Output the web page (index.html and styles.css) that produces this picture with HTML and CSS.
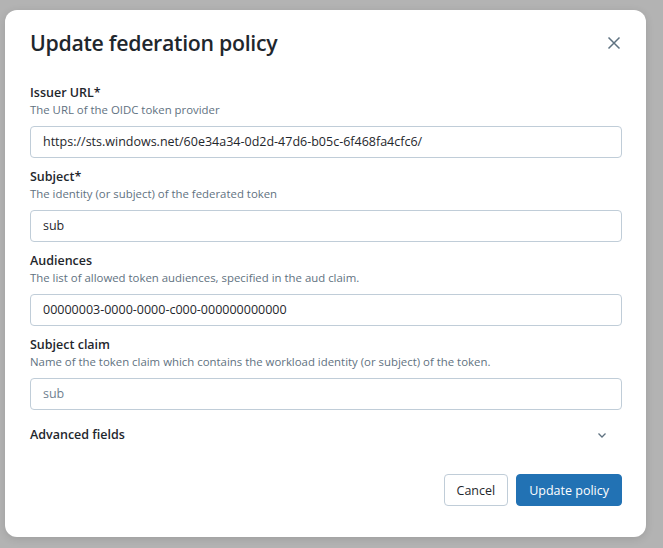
FILE: index.html
```html
<!DOCTYPE html>
<html lang="en">
<head>
<meta charset="utf-8">
<title>Update federation policy</title>
<link rel="stylesheet" href="styles.css">
</head>
<body>
<div class="backdrop">
  <div class="dialog">
    <div class="header">
      <h1 class="title">Update federation policy</h1>
      <button class="close" aria-label="Close">
        <svg width="16" height="16" viewBox="0 0 16 16"><path d="M2.5 2.5 L13.5 13.5 M13.5 2.5 L2.5 13.5" stroke="currentColor" stroke-width="1.5" fill="none"/></svg>
      </button>
    </div>
    <div class="form">
      <div class="field">
        <div class="label">Issuer URL*</div>
        <div class="desc">The URL of the OIDC token provider</div>
        <div class="input">https://sts.windows.net/60e34a34-0d2d-47d6-b05c-6f468fa4cfc6/</div>
      </div>
      <div class="field">
        <div class="label">Subject*</div>
        <div class="desc">The identity (or subject) of the federated token</div>
        <div class="input">sub</div>
      </div>
      <div class="field">
        <div class="label">Audiences</div>
        <div class="desc">The list of allowed token audiences, specified in the aud claim.</div>
        <div class="input">00000003-0000-0000-c000-000000000000</div>
      </div>
      <div class="field">
        <div class="label">Subject claim</div>
        <div class="desc">Name of the token claim which contains the workload identity (or subject) of the token.</div>
        <div class="input placeholder">sub</div>
      </div>
    </div>
    <div class="advanced">
      <span class="adv-label">Advanced fields</span>
      <svg class="chev" width="16" height="16" viewBox="0 0 16 16"><path d="M4.5 6.5 L8 10 L11.5 6.5" stroke="currentColor" stroke-width="1.3" fill="none"/></svg>
    </div>
    <div class="footer">
      <button class="btn">Cancel</button>
      <button class="btn primary">Update policy</button>
    </div>
  </div>
</div>
</body>
</html>
```
FILE: styles.css
```css
* { box-sizing: border-box; }
html, body { margin: 0; padding: 0; }
body {
  background: #b3b3b3;
  font-family: "Open Sans", "Noto Sans", sans-serif;
  color: #1f272d;
}
.backdrop {
  width: 663px;
  height: 548px;
  padding: 10px 0 0 5px;
}
.dialog {
  width: 641px;
  height: 527px;
  background: #ffffff;
  border-radius: 12px;
  padding: 19px 24px 31px 25px;
  box-shadow: 0 2px 8px rgba(0,0,0,0.12);
}
.header {
  display: flex;
  justify-content: space-between;
  align-items: center;
  height: 28px;
}
.title {
  margin: 0;
  font-size: 21.3px;
  line-height: 28px;
  font-weight: 600;
  color: #1f272d;
  letter-spacing: -0.3px;
}
.close {
  border: 0;
  background: none;
  padding: 0;
  width: 16px;
  height: 16px;
  color: #5f7281;
  display: flex;
}
.form {
  margin-top: 27px;
  display: flex;
  flex-direction: column;
  gap: 10px;
}
.field { display: flex; flex-direction: column; }
.label {
  font-size: 12.5px;
  line-height: 18px;
  font-weight: 600;
  color: #1f272d;
}
.desc {
  font-size: 11.4px;
  line-height: 16px;
  color: #5f7281;
}
.input {
  margin-top: 8px;
  height: 32px;
  border: 1px solid #c0cdd8;
  border-radius: 4px;
  padding: 0 12px;
  font-size: 12.5px;
  line-height: 30px;
  color: #1f272d;
}
.input.placeholder { color: #6f8190; }
.advanced {
  margin-top: 15px;
  height: 20px;
  display: flex;
  align-items: center;
  justify-content: space-between;
}
.adv-label {
  font-size: 12.5px;
  line-height: 20px;
  font-weight: 600;
}
.chev { color: #5f7281; margin-right: 12px; }
.footer {
  margin-top: 29px;
  display: flex;
  justify-content: flex-end;
  gap: 8px;
}
.btn {
  height: 32px;
  padding: 0 12px;
  border: 1px solid #c0cdd8;
  border-radius: 4px;
  background: #ffffff;
  font-family: inherit;
  font-size: 12.5px;
  color: #1f272d;
}
.btn.primary {
  background: #2272b4;
  border-color: #2272b4;
  color: #ffffff;
}
```
